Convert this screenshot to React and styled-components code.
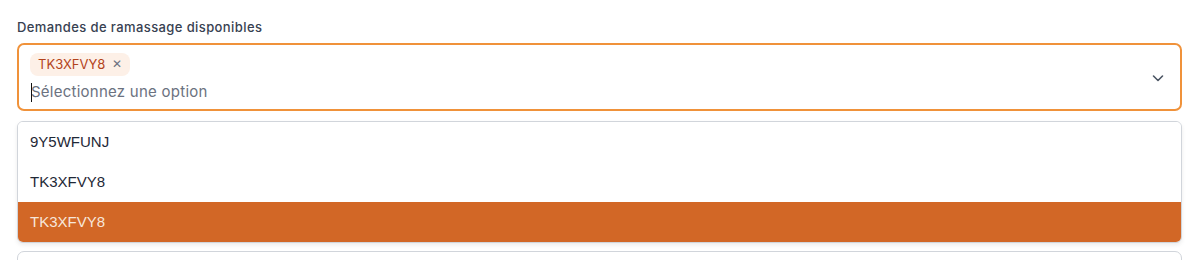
import React from "react";
import styled, { createGlobalStyle } from "styled-components";

const Global = createGlobalStyle`
  html, body { margin: 0; padding: 0; background: #ffffff; }
  body { font-family: Inter, "Noto Sans", sans-serif; }
  * { box-sizing: border-box; }
`;

const Page = styled.div`
  padding: 18px 10px 0 17px;
  width: 1192px;
  height: 260px;
  overflow: hidden;
`;

const Label = styled.div`
  font-size: 13px;
  font-weight: 500;
  color: #374151;
  line-height: 18px;
  margin-bottom: 7px;
  letter-spacing: 0.4px;
`;

const Control = styled.div`
  display: flex;
  align-items: center;
  border: 2px solid #f0923a;
  border-radius: 7px;
  height: 68px;
  padding: 5px 14px 5px 11px;
  background: #fff;
`;

const Values = styled.div`
  flex: 1;
  display: flex;
  flex-direction: column;
  align-items: flex-start;
  gap: 6px;
`;

const Chip = styled.span`
  display: inline-flex;
  align-items: center;
  gap: 7px;
  height: 23px;
  padding: 0 8px 0 8px;
  border-radius: 8px;
  background: #fdf0e7;
  color: #b3431b;
  font-size: 13px;
  font-weight: 400;
`;

const Close = styled.span`
  color: #6b7280;
  font-size: 12px;
  line-height: 1;
`;

const Input = styled.div`
  position: relative;
  font-size: 15px;
  color: #6b7280;
  line-height: 20px;
  padding-left: 1px;
  letter-spacing: 0.25px;
  &::before {
    content: "";
    position: absolute;
    left: 1px;
    top: 1px;
    width: 1px;
    height: 19px;
    background: #111;
  }
`;

const Chevron = styled.svg`
  width: 16px;
  height: 16px;
  margin-top: 2px;
  flex-shrink: 0;
`;

const Menu = styled.div`
  margin-top: 10px;
  border: 1px solid #d1d5db;
  border-radius: 6px;
  overflow: hidden;
  box-shadow: 0 2px 4px rgba(0, 0, 0, 0.08);
  background: #fff;
  position: relative;
  z-index: 2;
`;

const Option = styled.div`
  height: 40px;
  display: flex;
  align-items: center;
  padding-left: 12px;
  padding-bottom: 1px;
  font-family: "Liberation Sans", Arial, sans-serif;
  font-size: 15px;
  color: ${(p) => (p.$active ? "#f7e6da" : "#1f2937")};
  background: ${(p) => (p.$active ? "#d26726" : "#fff")};
`;

const NextField = styled.div`
  margin-top: 8px;
  height: 40px;
  border: 1px solid #d1d5db;
  border-radius: 7px;
`;

export default function App() {
  return (
    <>
      <Global />
      <Page>
        <Label>Demandes de ramassage disponibles</Label>
        <Control>
          <Values>
            <Chip>
              TK3XFVY8
              <Close>✕</Close>
            </Chip>
            <Input>Sélectionnez une option</Input>
          </Values>
          <Chevron viewBox="0 0 16 16" fill="none">
            <path d="M3.5 6l4.5 4.5L12.5 6" stroke="#4b5563" strokeWidth="1.6" strokeLinecap="round" strokeLinejoin="round" />
          </Chevron>
        </Control>
        <Menu>
          <Option>9Y5WFUNJ</Option>
          <Option>TK3XFVY8</Option>
          <Option $active>TK3XFVY8</Option>
        </Menu>
        <NextField />
      </Page>
    </>
  );
}
